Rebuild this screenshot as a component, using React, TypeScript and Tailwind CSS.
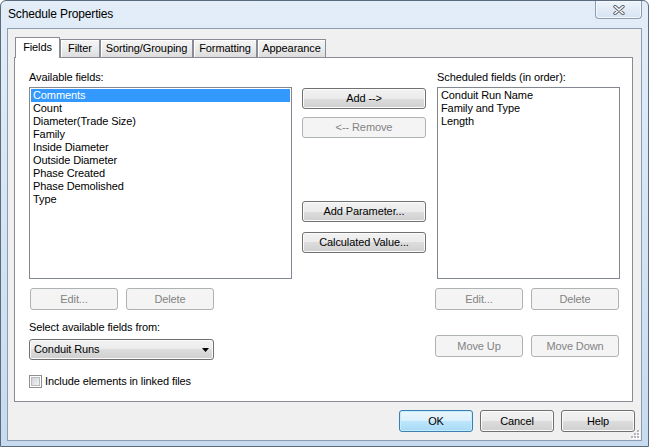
import React from "react";

const FONT = "font-['Liberation_Sans',Arial,sans-serif]";

const BTN =
  "flex items-center justify-center rounded-[3px] border border-[#707070] bg-[linear-gradient(#f2f2f2_0%,#ebebeb_50%,#dddddd_50%,#cfcfcf_100%)] shadow-[inset_0_0_0_1px_#fbfbfb] text-black";
const COMBO =
  "flex items-center justify-between rounded-[3px] border border-[#707070] bg-[linear-gradient(#f2f2f2_0%,#ebebeb_50%,#dddddd_50%,#cfcfcf_100%)] shadow-[inset_0_0_0_1px_#fbfbfb] text-black";
const BTN_DIS =
  "flex items-center justify-center rounded-[3px] border border-[#adb2b5] bg-[#f4f4f4] text-[#838383]";
const BTN_DEF =
  "flex items-center justify-center rounded-[3px] border border-[#3c7fb1] bg-[linear-gradient(#eaf6fd_0%,#d9f0fc_50%,#bee6fd_50%,#a7d9f5_100%)] shadow-[inset_0_0_0_1px_#c5ecfd] text-black";

const TAB_OFF =
  "mt-[2px] h-[18px] flex items-center justify-center border border-b-0 border-[#898c95] bg-[linear-gradient(#f5f5f5_0%,#ececec_50%,#dcdcdc_100%)] shadow-[inset_1px_1px_0_#ffffff]";

function ListBox({ items, selected }: { items: string[]; selected?: number }) {
  return (
    <div className="mt-[2px] h-[192px] border border-[#828790] bg-white p-px">
      {items.map((t, i) => (
        <div
          key={t}
          className={
            i === selected
              ? "h-[13px] leading-[13px] pl-[2px] bg-[#3399ff] text-white"
              : "h-[13px] leading-[13px] pl-[2px] text-black"
          }
        >
          {t}
        </div>
      ))}
    </div>
  );
}

export default function App() {
  return (
    <div
      className={`${FONT} text-[11px] tracking-[-0.1px] w-[649px] h-[447px] border border-[#5a6b7e] rounded-t-[6px] flex flex-col overflow-hidden bg-[linear-gradient(#e2edf8,#c7dbef)]`}
    >
      {/* Title bar */}
      <div className="h-[27px] flex items-start justify-between shrink-0">
        <div className="pl-[7px] h-[27px] leading-[27px] text-[12px] text-black tracking-[-0.15px]">
          Schedule Properties
        </div>
        <div className="mr-[6px] w-[47px] h-[18px] rounded-b-[4px] border border-t-0 border-[#8d9cb0] bg-[linear-gradient(#eef4fb,#d5e3f2)] shadow-[inset_0_0_0_1px_#f4f8fd] flex items-center justify-center">
          <svg width="12" height="10" viewBox="0 0 12 10">
            <path d="M2 1.5 L10 8.5 M10 1.5 L2 8.5" stroke="#5b5f66" strokeWidth="3.4" strokeLinecap="round" />
            <path d="M2 1.5 L10 8.5 M10 1.5 L2 8.5" stroke="#ffffff" strokeWidth="1.6" strokeLinecap="round" />
          </svg>
        </div>
      </div>

      {/* Client area */}
      <div className="ml-[6px] w-[635px] h-[413px] border border-[#8d9db0] bg-[#f0f0f0] relative flex flex-col pl-[6px] pt-[8px]">
        <div className="w-[627px] flex flex-col">
          {/* Tabs */}
          <div className="ml-px h-[20px] flex items-start">
            <div className="relative z-10 w-[45px] h-[21px] flex items-center justify-center border border-b-0 border-[#898c95] bg-white pb-[2px]">
              Fields
            </div>
            <div className={`${TAB_OFF} w-[40px]`}>Filter</div>
            <div className={`${TAB_OFF} w-[93px]`}>Sorting/Grouping</div>
            <div className={`${TAB_OFF} w-[64px]`}>Formatting</div>
            <div className={`${TAB_OFF} w-[69px]`}>Appearance</div>
          </div>

          {/* Panel */}
          <div className="w-[619px] h-[345px] border border-[#898c95] bg-white flex pl-[14px] pt-[12px]">
            {/* Left column */}
            <div className="w-[263px] flex flex-col">
              <div className="h-[15px] leading-[15px]">Available fields:</div>
              <ListBox
                selected={0}
                items={[
                  "Comments",
                  "Count",
                  "Diameter(Trade Size)",
                  "Family",
                  "Inside Diameter",
                  "Outside Diameter",
                  "Phase Created",
                  "Phase Demolished",
                  "Type",
                ]}
              />
              <div className="mt-[9px] ml-px flex gap-[8px]">
                <div className={`${BTN_DIS} w-[88px] h-[22px]`}>Edit...</div>
                <div className={`${BTN_DIS} w-[88px] h-[22px]`}>Delete</div>
              </div>
              <div className="mt-[10px] h-[15px] leading-[15px]">Select available fields from:</div>
              <div className={`${COMBO} mt-[4px] w-[185px] h-[21px] pl-[4px] pr-[4px]`}>
                <span>Conduit Runs</span>
                <svg width="7" height="4" viewBox="0 0 7 4">
                  <path d="M0 0 H7 L3.5 4 Z" fill="#000" />
                </svg>
              </div>
              <div className="mt-[15px] flex items-center h-[13px]">
                <div className="w-[13px] h-[13px] border border-[#8e8f8f] bg-white p-px shrink-0">
                  <div className="w-full h-full border border-[#b8bcc2] bg-[linear-gradient(135deg,#cfd2d7,#f3f3f3)]" />
                </div>
                <span className="ml-[3px]">Include elements in linked files</span>
              </div>
            </div>

            {/* Middle column */}
            <div className="ml-[10px] w-[124px] flex flex-col pt-[18px]">
              <div className={`${BTN} h-[21px]`}>Add --&gt;</div>
              <div className={`${BTN_DIS} mt-[8px] h-[21px]`}>&lt;-- Remove</div>
              <div className={`${BTN} mt-[63px] h-[21px]`}>Add Parameter...</div>
              <div className={`${BTN} mt-[10px] h-[21px]`}>Calculated Value...</div>
            </div>

            {/* Right column */}
            <div className="ml-[11px] w-[183px] flex flex-col">
              <div className="h-[15px] leading-[15px]">Scheduled fields (in order):</div>
              <ListBox items={["Conduit Run Name", "Family and Type", "Length"]} />
              <div className="mt-[9px] -ml-[2px] flex gap-[8px]">
                <div className={`${BTN_DIS} w-[88px] h-[22px]`}>Edit...</div>
                <div className={`${BTN_DIS} w-[88px] h-[22px]`}>Delete</div>
              </div>
              <div className="mt-[25px] -ml-[2px] flex gap-[8px]">
                <div className={`${BTN_DIS} w-[88px] h-[22px]`}>Move Up</div>
                <div className={`${BTN_DIS} w-[88px] h-[22px]`}>Move Down</div>
              </div>
            </div>
          </div>

          {/* Bottom buttons */}
          <div className="mt-[8px] flex justify-end gap-[7px] pr-[6px]">
            <div className={`${BTN_DEF} w-[74px] h-[22px]`}>OK</div>
            <div className={`${BTN} w-[74px] h-[22px]`}>Cancel</div>
            <div className={`${BTN} w-[74px] h-[22px]`}>Help</div>
          </div>
        </div>

        {/* Resize grip */}
        <svg className="absolute right-px bottom-px" width="10" height="10" viewBox="0 0 10 10">
          {[
            [7, 1],
            [4, 4],
            [7, 4],
            [1, 7],
            [4, 7],
            [7, 7],
          ].map(([x, y]) => (
            <g key={`${x}-${y}`}>
              <rect x={x + 1} y={y + 1} width="2" height="2" fill="#ffffff" />
              <rect x={x} y={y} width="2" height="2" fill="#b3b7bd" />
            </g>
          ))}
        </svg>
      </div>
    </div>
  );
}
